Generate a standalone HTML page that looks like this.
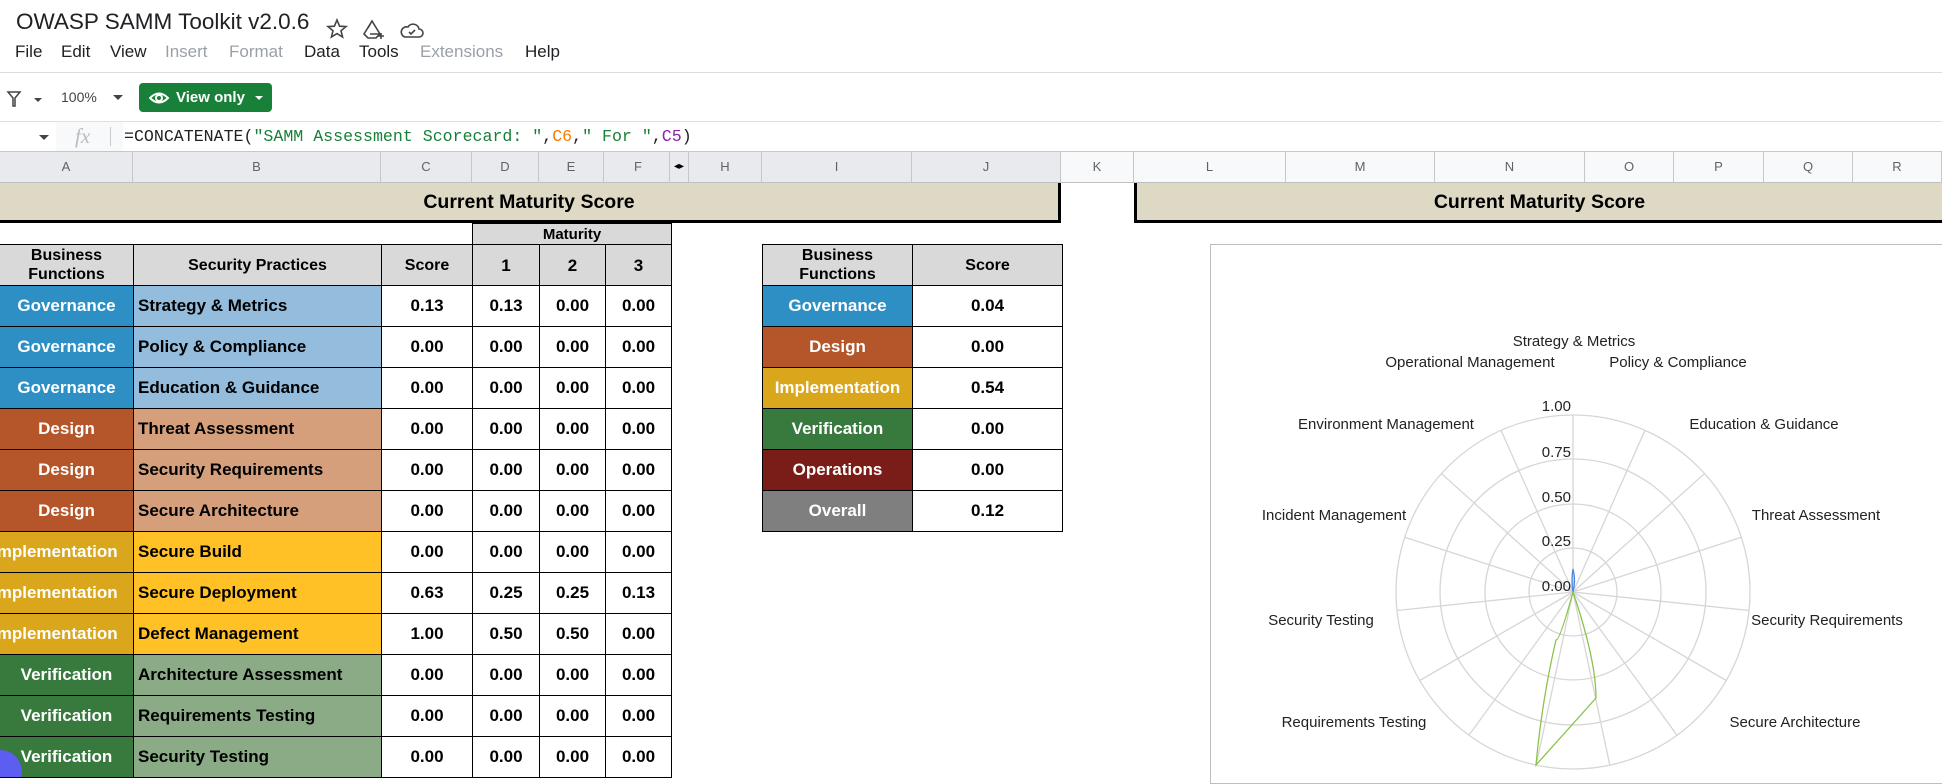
<!DOCTYPE html>
<html><head><meta charset="utf-8"><style>
*{box-sizing:border-box;margin:0;padding:0}
body{width:1942px;height:777px;overflow:hidden;background:#fff;font-family:"Liberation Sans",Arial,sans-serif;position:relative;color:#000}
.a{position:absolute}
.menu span{position:absolute;top:42px;font-size:17px;color:#202124}
.menu span.g{color:#9aa0a6}
.ch{position:absolute;top:151px;height:32px;border-right:1px solid #c7c7c7;border-bottom:1px solid #c0c0c0;border-top:1px solid #c7c7c7;font-size:13px;color:#5f6368;text-align:center;line-height:30px;background:#e9eaee}
.ch.l{background:#f8f9fa}
table{border-collapse:collapse;table-layout:fixed;position:absolute}
td{border:1px solid #000;font-weight:bold;font-size:17px;text-align:center;height:41px;padding:0;white-space:nowrap;overflow:hidden}
td.p{text-align:left;padding-left:4px}
.hd td{background:#d9d9d9;line-height:19px}
.gv{background:#2e8fc5;color:#fff}.gvl{background:#93bcdd}
.ds{background:#b5562a;color:#fff}.dsl{background:#d59f7c}
.im{background:#d9a61c;color:#fff}.iml{background:#ffc125}
.vf{background:#387a3e;color:#fff}.vfl{background:#8aab86}
.op{background:#7a1c18;color:#fff}.ov{background:#7f7f7f;color:#fff}
.cl{display:block;width:134px;overflow:visible;text-indent:-12px}
</style></head><body>
<div class="a" style="left:16px;top:9px;font-size:22.5px;color:#202124">OWASP SAMM Toolkit v2.0.6</div>
<svg class="a" style="left:325px;top:17px" width="110" height="26" viewBox="0 0 110 26" fill="none" stroke="#444" stroke-width="1.6">
<path d="M12 3 L14.6 9.2 L21 9.6 L16 13.8 L17.6 20 L12 16.6 L6.4 20 L8 13.8 L3 9.6 L9.4 9.2 Z"/>
<path d="M47 4 L55 17 L51 21 L43 21 L39 17 Z M47 4 L43 11 M55 17 L45 17"/><path d="M56 16 v6 M53 19 h6"/>
<path d="M80 20 h14 a4 4 0 0 0 0-8 a6 6 0 0 0-11-2 a5 5 0 0 0-3 10 Z"/><path d="M84 15 l2 2 l4-4"/>
</svg>
<div class="menu"><span style="left:15px">File</span><span style="left:61px">Edit</span><span style="left:110px">View</span><span class="g" style="left:165px">Insert</span><span class="g" style="left:229px">Format</span><span style="left:304px">Data</span><span style="left:359px">Tools</span><span class="g" style="left:420px">Extensions</span><span style="left:525px">Help</span></div>
<div class="a" style="left:0;top:72px;width:1942px;height:1px;background:#dadce0"></div>
<svg class="a" style="left:6px;top:90px" width="40" height="18"><path d="M2 2 h12 l-5 6 v8 h-2 v-8 z" fill="none" stroke="#444" stroke-width="1.5"/><path d="M28 8 l4 4 l4-4z" fill="#444"/></svg>
<div class="a" style="left:61px;top:89px;font-size:14px;color:#444">100%</div>
<svg class="a" style="left:112px;top:94px" width="12" height="8"><path d="M1 1 l5 5 l5-5z" fill="#444"/></svg>
<div class="a" style="left:139px;top:83px;width:133px;height:29px;background:#188038;border-radius:4px;color:#fff;font-weight:bold;font-size:15px;line-height:29px;padding-left:37px">View only</div>
<svg class="a" style="left:149px;top:88px" width="120" height="20" fill="none" stroke="#fff" stroke-width="2"><path d="M1 10 q9-9 18 0 q-9 9-18 0z"/><circle cx="10" cy="10" r="3"/><path d="M106 8 l4 4 l4-4z" fill="#fff" stroke="none"/></svg>
<div class="a" style="left:0;top:121px;width:1942px;height:1px;background:#e0e0e0"></div>
<svg class="a" style="left:38px;top:134px" width="12" height="8"><path d="M1 1 l5 5 l5-5z" fill="#444"/></svg>
<div class="a" style="left:56px;top:122px;width:67px;height:29px;background:#f8f9fa"></div>
<div class="a" style="left:75px;top:124px;font-family:'Liberation Serif',serif;font-style:italic;font-size:21px;color:#bbb">fx</div>
<div class="a" style="left:110px;top:127px;width:1px;height:19px;background:#ccc"></div>
<div class="a" style="left:124px;top:127px;font-family:'Liberation Mono',monospace;font-size:16.6px;color:#202124;white-space:pre">=CONCATENATE(<span style="color:#188038">"SAMM Assessment Scorecard: "</span>,<span style="color:#f57c00">C6</span>,<span style="color:#188038">" For "</span>,<span style="color:#8e24aa">C5</span>)</div>
<div class="ch" style="left:0;width:133px">A</div><div class="ch" style="left:133px;width:248px">B</div><div class="ch" style="left:381px;width:91px">C</div><div class="ch" style="left:472px;width:67px">D</div><div class="ch" style="left:539px;width:65px">E</div><div class="ch" style="left:604px;width:66px;text-align:left;padding-left:30px">F</div>
<div class="ch" style="left:670px;width:19px;font-size:10px;color:#000">◂▸</div>
<div class="ch" style="left:689px;width:73px">H</div><div class="ch" style="left:762px;width:150px">I</div><div class="ch" style="left:912px;width:149px">J</div>
<div class="ch l" style="left:1061px;width:73px">K</div><div class="ch l" style="left:1134px;width:152px">L</div><div class="ch l" style="left:1286px;width:149px">M</div><div class="ch l" style="left:1435px;width:150px">N</div><div class="ch l" style="left:1585px;width:89px">O</div><div class="ch l" style="left:1674px;width:90px">P</div><div class="ch l" style="left:1764px;width:89px">Q</div><div class="ch l" style="left:1853px;width:89px">R</div>
<div class="a" style="left:0;top:183px;width:1061px;height:40px;background:#ddd9c4;border-right:3px solid #000;border-bottom:3px solid #000;text-align:center;font-weight:bold;font-size:19.5px;line-height:38px">Current Maturity Score</div>
<div class="a" style="left:1134px;top:183px;width:808px;height:40px;background:#ddd9c4;border-left:3px solid #000;border-bottom:3px solid #000;text-align:center;font-weight:bold;font-size:19.5px;line-height:38px">Current Maturity Score</div>
<table style="left:-1px;top:223px;width:672px">
<colgroup><col style="width:134px"><col style="width:248px"><col style="width:91px"><col style="width:67px"><col style="width:66px"><col style="width:66px"></colgroup>
<tr style="height:21px"><td style="border:none;height:21px"></td><td style="border:none;height:21px"></td><td style="border-top:none;border-left:none;border-bottom:1px solid #000;height:21px"></td><td colspan="3" style="background:#d9d9d9;font-size:15px;height:21px">Maturity</td></tr>
<tr class="hd"><td style="font-size:16px">Business<br>Functions</td><td style="font-size:16px">Security Practices</td><td style="font-size:16px">Score</td><td>1</td><td>2</td><td>3</td></tr>
<tr><td class="gv">Governance</td><td class="gvl p">Strategy &amp; Metrics</td><td>0.13</td><td>0.13</td><td>0.00</td><td>0.00</td></tr>
<tr><td class="gv">Governance</td><td class="gvl p">Policy &amp; Compliance</td><td>0.00</td><td>0.00</td><td>0.00</td><td>0.00</td></tr>
<tr><td class="gv">Governance</td><td class="gvl p">Education &amp; Guidance</td><td>0.00</td><td>0.00</td><td>0.00</td><td>0.00</td></tr>
<tr><td class="ds">Design</td><td class="dsl p">Threat Assessment</td><td>0.00</td><td>0.00</td><td>0.00</td><td>0.00</td></tr>
<tr><td class="ds">Design</td><td class="dsl p">Security Requirements</td><td>0.00</td><td>0.00</td><td>0.00</td><td>0.00</td></tr>
<tr><td class="ds">Design</td><td class="dsl p">Secure Architecture</td><td>0.00</td><td>0.00</td><td>0.00</td><td>0.00</td></tr>
<tr><td class="im" style="text-align:left;text-indent:-8px">Implementation</td><td class="iml p">Secure Build</td><td>0.00</td><td>0.00</td><td>0.00</td><td>0.00</td></tr>
<tr><td class="im" style="text-align:left;text-indent:-8px">Implementation</td><td class="iml p">Secure Deployment</td><td>0.63</td><td>0.25</td><td>0.25</td><td>0.13</td></tr>
<tr><td class="im" style="text-align:left;text-indent:-8px">Implementation</td><td class="iml p">Defect Management</td><td>1.00</td><td>0.50</td><td>0.50</td><td>0.00</td></tr>
<tr><td class="vf">Verification</td><td class="vfl p">Architecture Assessment</td><td>0.00</td><td>0.00</td><td>0.00</td><td>0.00</td></tr>
<tr><td class="vf">Verification</td><td class="vfl p">Requirements Testing</td><td>0.00</td><td>0.00</td><td>0.00</td><td>0.00</td></tr>
<tr><td class="vf">Verification</td><td class="vfl p">Security Testing</td><td>0.00</td><td>0.00</td><td>0.00</td><td>0.00</td></tr>
</table>
<table style="left:762px;top:244px;width:300px">
<colgroup><col style="width:150px"><col style="width:150px"></colgroup>
<tr class="hd"><td style="font-size:16px">Business<br>Functions</td><td style="font-size:16px">Score</td></tr>
<tr><td class="gv">Governance</td><td>0.04</td></tr>
<tr><td class="ds">Design</td><td>0.00</td></tr>
<tr><td class="im">Implementation</td><td>0.54</td></tr>
<tr><td class="vf">Verification</td><td>0.00</td></tr>
<tr><td class="op">Operations</td><td>0.00</td></tr>
<tr><td class="ov">Overall</td><td>0.12</td></tr>
</table>
<div class="a" style="left:1210px;top:244px;width:740px;height:540px;border:1px solid #bdbdbd"></div>
<svg class="a" style="left:0;top:0" width="1942" height="777">
<g fill="none" stroke="#d6d6d6" stroke-width="1.3">
<circle cx="1573" cy="592" r="44"/><circle cx="1573" cy="592" r="88"/><circle cx="1573" cy="592" r="133"/><circle cx="1573" cy="592" r="177"/>
<g id="s"><line x1="1573" y1="592" x2="1573" y2="415"/></g>
<use href="#s" transform="rotate(24 1573 592)"/><use href="#s" transform="rotate(48 1573 592)"/><use href="#s" transform="rotate(72 1573 592)"/><use href="#s" transform="rotate(96 1573 592)"/><use href="#s" transform="rotate(120 1573 592)"/><use href="#s" transform="rotate(144 1573 592)"/><use href="#s" transform="rotate(168 1573 592)"/><use href="#s" transform="rotate(192 1573 592)"/><use href="#s" transform="rotate(216 1573 592)"/><use href="#s" transform="rotate(240 1573 592)"/><use href="#s" transform="rotate(264 1573 592)"/><use href="#s" transform="rotate(288 1573 592)"/><use href="#s" transform="rotate(312 1573 592)"/><use href="#s" transform="rotate(336 1573 592)"/>
</g>
<path d="M1573 592 Q1560 640 1556 640 Q1542 700 1536 765 L1596 698 Q1596 660 1573 592" fill="none" stroke="#8bc34a" stroke-width="1.3"/>
<path d="M1573 592 Q1571 580 1573 569 Q1576 580 1573 592" fill="none" stroke="#4a86e8" stroke-width="1.3"/>
<g font-size="15" fill="#222" text-anchor="middle">
<text x="1574" y="346">Strategy &amp; Metrics</text>
<text x="1470" y="367">Operational Management</text>
<text x="1678" y="367">Policy &amp; Compliance</text>
<text x="1386" y="429">Environment Management</text>
<text x="1764" y="429">Education &amp; Guidance</text>
<text x="1334" y="520">Incident Management</text>
<text x="1816" y="520">Threat Assessment</text>
<text x="1321" y="625">Security Testing</text>
<text x="1827" y="625">Security Requirements</text>
<text x="1354" y="727">Requirements Testing</text>
<text x="1795" y="727">Secure Architecture</text>
</g>
<g font-size="15" fill="#222" text-anchor="end">
<text x="1571" y="411">1.00</text><text x="1571" y="457">0.75</text><text x="1571" y="502">0.50</text><text x="1571" y="546">0.25</text><text x="1571" y="591">0.00</text>
</g>
<circle cx="0" cy="772" r="22" fill="#5b5ef0"/>
</svg>
</body></html>
